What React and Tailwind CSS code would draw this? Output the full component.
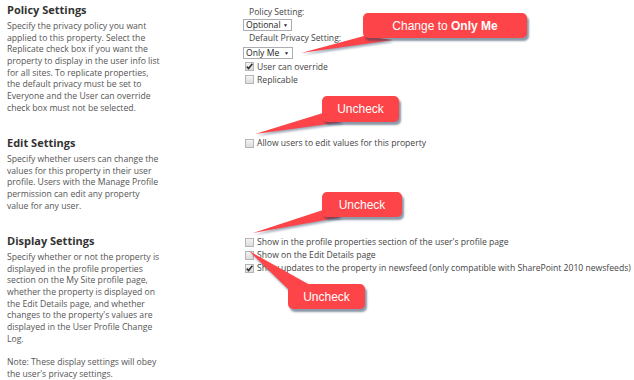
import React from "react";

const Box = ({ checked }) => (
  <span className="relative inline-block w-[9px] h-[9px] border border-[#b5b5b5] bg-gradient-to-b from-[#f4f4f4] to-[#dcdcdc] shrink-0">
    {checked && (
      <svg viewBox="0 0 9 9" className="absolute left-[-1px] top-[-1px] w-[9px] h-[9px]">
        <path d="M1.8 4.6 L3.6 6.6 L7.4 1.8" stroke="#333" strokeWidth="1.6" fill="none" />
      </svg>
    )}
  </span>
);

const Check = ({ checked, children }) => (
  <div className="flex items-center gap-[3px] h-[13px] ml-[2px]">
    <Box checked={checked} />
    <span className="whitespace-nowrap">{children}</span>
  </div>
);

const Select = ({ value, w }) => (
  <div className={`flex items-center justify-between h-[12px] border border-[#abadb3] bg-white pl-[2px] pr-[3px] text-[#222] ${w}`}>
    <span>{value}</span>
    <span className="text-[5px]">▼</span>
  </div>
);

const Callout = ({ className, children }) => (
  <div
    className={`absolute flex items-center justify-center rounded-[5px] bg-[#fd4448] text-white text-[12px] shadow-[2px_3px_2px_rgba(45,65,95,0.55)] ${className}`}
    style={{ fontFamily: '"Liberation Sans", Arial, sans-serif' }}
  >
    {children}
  </div>
);

const Left = ({ title, lines }) => (
  <div className="w-[243px] shrink-0 pl-[7px]">
    <div className="text-[11px] leading-[14px] font-bold text-[#333]">{title}</div>
    <div className="mt-[4px] text-[8.65px] leading-[11.7px] text-[#555]">
      {lines.map((l, i) => (
        <div key={i} className="whitespace-nowrap h-[11.7px]">{l}</div>
      ))}
    </div>
  </div>
);

export default function App() {
  return (
    <div
      className="relative w-[634px] h-[380px] overflow-hidden bg-white text-[#444]"
      style={{ fontFamily: '"Open Sans", "Noto Sans", sans-serif' }}
    >
      <div className="flex flex-col pt-[3px]">
        <div className="flex h-[133px]">
          <Left
            title="Policy Settings"
            lines={[
              "Specify the privacy policy you want",
              "applied to this property. Select the",
              "Replicate check box if you want the",
              "property to display in the user info list",
              "for all sites. To replicate properties,",
              "the default privacy must be set to",
              "Everyone and the User can override",
              "check box must not be selected.",
            ]}
          />
          <div className="flex flex-col text-[8.6px] leading-[12px]">
            <div className="mt-[3px] ml-[6px]">Policy Setting:</div>
            <div className="mt-[1px]"><Select value="Optional" w="w-[49px]" /></div>
            <div className="mt-[1px] ml-[6px]">Default Privacy Setting:</div>
            <div className="mt-[3px]"><Select value="Only Me" w="w-[50px]" /></div>
            <div className="mt-[1px]">
              <Check checked>User can override</Check>
              <Check>Replicable</Check>
            </div>
          </div>
        </div>
        <div className="flex h-[98px]">
          <Left
            title="Edit Settings"
            lines={[
              "Specify whether users can change the",
              "values for this property in their user",
              "profile. Users with the Manage Profile",
              "permission can edit any property",
              "value for any user.",
            ]}
          />
          <div className="text-[8.6px] leading-[12px] pt-[0.5px]">
            <Check>Allow users to edit values for this property</Check>
          </div>
        </div>
        <div className="flex">
          <Left
            title="Display Settings"
            lines={[
              "Specify whether or not the property is",
              "displayed in the profile properties",
              "section on the My Site profile page,",
              "whether the property is displayed on",
              "the Edit Details page, and whether",
              "changes to the property's values are",
              "displayed in the User Profile Change",
              "Log.",
              "\u00a0",
              "Note: These display settings will obey",
              "the user's privacy settings.",
            ]}
          />
          <div className="text-[8.6px] leading-[12px] pt-[1.5px]">
            <Check>Show in the profile properties section of the user's profile page</Check>
            <Check>Show on the Edit Details page</Check>
            <Check checked>Show updates to the property in newsfeed (only compatible with SharePoint 2010 newsfeeds)</Check>
          </div>
        </div>
      </div>

      <svg className="absolute inset-0 w-[634px] h-[380px] pointer-events-none drop-shadow-[1px_2px_1px_rgba(45,65,95,0.45)]" viewBox="0 0 634 380">
        <polygon points="364,36 393,40 301,53" fill="#fd4448" />
        <polygon points="323,113 343,122 255,134" fill="#fd4448" />
        <polygon points="323,210 342,217 253,233" fill="#fd4448" />
        <polygon points="290,291 310,285 249,251" fill="#fd4448" />
      </svg>

      <Callout className="left-[363px] top-[13px] w-[164px] h-[25px]">
        <span>Change to&nbsp;</span>
        <span className="font-bold">Only Me</span>
      </Callout>
      <Callout className="left-[322px] top-[96px] w-[77px] h-[26px]">Uncheck</Callout>
      <Callout className="left-[322px] top-[192px] w-[80px] h-[25px]">Uncheck</Callout>
      <Callout className="left-[288px] top-[284px] w-[77px] h-[25px]">Uncheck</Callout>
    </div>
  );
}
